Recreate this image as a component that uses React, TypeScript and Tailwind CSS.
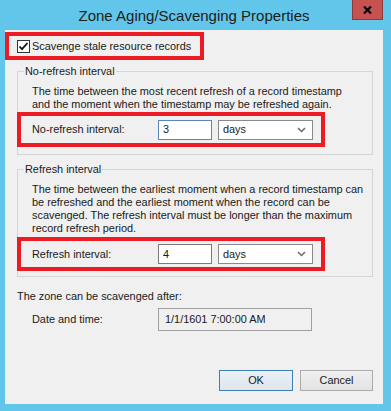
import React from 'react';

const Chevron: React.FC = () => (
  <svg width="9" height="6" viewBox="0 0 9 6" className="shrink-0">
    <path d="M1 1 L4.5 4.5 L8 1" fill="none" stroke="#6a6a6a" strokeWidth="1.5" />
  </svg>
);

const IntervalRow: React.FC<{ label: string; value: string; inputBorder: string; h: string; mt: string }> = ({
  label,
  value,
  inputBorder,
  h,
  mt,
}) => (
  <div className={`${mt} ${h} ml-[-1px] w-[308px] border-4 border-[#ed1c24] flex items-center pl-[11px]`}>
    <span className="w-[126px] shrink-0">{label}</span>
    <div className={`w-[54px] h-[20px] bg-white border ${inputBorder} flex items-center pl-[4px]`}>{value}</div>
    <div className="ml-[6px] w-[95px] h-[20px] bg-white border border-[#8a8a8a] flex items-center justify-between pl-[4px] pr-[6px]">
      <span>days</span>
      <Chevron />
    </div>
  </div>
);

const Lines: React.FC<{ lines: string[] }> = ({ lines }) => (
  <div className="pt-[7px] pl-[14px] whitespace-nowrap">
    {lines.map((l) => (
      <div key={l}>{l}</div>
    ))}
  </div>
);

const App: React.FC = () => {
  return (
    <div className="w-[391px] h-[411px] bg-[#62c6ea] flex flex-col font-['Liberation_Sans',Arial,sans-serif] text-[10.9px] leading-[13px] text-[#1a1a1a]">
      {/* Title bar */}
      <div className="relative h-[30px] shrink-0 flex items-center justify-center">
        <span className="text-[15px] leading-[20px] text-[#202020] mt-[1px] ml-[-3px]">Zone Aging/Scavenging Properties</span>
        <div className="absolute top-0 right-[8px] w-[31px] h-[20px] bg-[#c75050] border border-[#8c3a3a] border-t-0 flex items-center justify-center">
          <svg width="9" height="8" viewBox="0 0 9 8">
            <path d="M1 0.5 L8 7.5 M8 0.5 L1 7.5" stroke="#000" strokeWidth="2.2" />
          </svg>
        </div>
      </div>

      {/* Dialog body */}
      <div className="ml-[5px] w-[378px] h-[374px] bg-[#f0f0f0] flex flex-col">
        {/* Scavenge checkbox */}
        <div className="mt-[2px] w-[199px] h-[28px] border-4 border-[#ed1c24] flex items-center pl-[8px]">
          <svg width="13" height="13" viewBox="0 0 13 13" className="shrink-0">
            <rect x="0.5" y="0.5" width="12" height="12" fill="#fff" stroke="#333" />
            <path d="M2.5 6.5 L5 9.2 L10.5 3" fill="none" stroke="#111" strokeWidth="1.8" />
          </svg>
          <span className="ml-[2px] whitespace-nowrap">Scavenge stale resource records</span>
        </div>

        {/* No-refresh group */}
        <fieldset className="mt-[5px] ml-[12px] w-[356px] border border-[#d5d5d5] pb-[7px]">
          <legend className="ml-[6px] px-[1px] leading-[13px]">No-refresh interval</legend>
          <Lines
            lines={[
              'The time between the most recent refresh of a record timestamp',
              'and the moment when the timestamp may be refreshed again.',
            ]}
          />
          <IntervalRow label="No-refresh interval:" value="3" inputBorder="border-[#5a86b8]" h="h-[35px]" mt="mt-[1px]" />
        </fieldset>

        {/* Refresh group */}
        <fieldset className="mt-[8px] ml-[12px] w-[356px] border border-[#d5d5d5] pb-[5px]">
          <legend className="ml-[6px] px-[1px] leading-[13px]">Refresh interval</legend>
          <Lines
            lines={[
              'The time between the earliest moment when a record timestamp can',
              'be refreshed and the earliest moment when the record can be',
              'scavenged. The refresh interval must be longer than the maximum',
              'record refresh period.',
            ]}
          />
          <IntervalRow label="Refresh interval:" value="4" inputBorder="border-[#7a7a7a]" h="h-[34px]" mt="mt-[2px]" />
        </fieldset>

        <p className="mt-[13px] ml-[12px]">The zone can be scavenged after:</p>
        <div className="mt-[5px] ml-[27px] flex items-center h-[23px]">
          <span className="w-[126px] shrink-0">Date and time:</span>
          <div className="w-[154px] h-[23px] border border-[#a0a0a0] bg-[#f0f0f0] flex items-center pl-[6px]">1/1/1601 7:00:00 AM</div>
        </div>

        {/* Buttons */}
        <div className="mt-auto mb-[13px] flex justify-end gap-[7px] pr-[10px]">
          <button className="w-[74px] h-[21px] border border-[#3c7fb1] bg-gradient-to-b from-[#eaf0f6] to-[#dfe5ec] leading-[13px]">OK</button>
          <button className="w-[73px] h-[21px] border border-[#acacac] bg-gradient-to-b from-[#efefef] to-[#e3e3e3] leading-[13px]">Cancel</button>
        </div>
      </div>
    </div>
  );
};

export default App;
